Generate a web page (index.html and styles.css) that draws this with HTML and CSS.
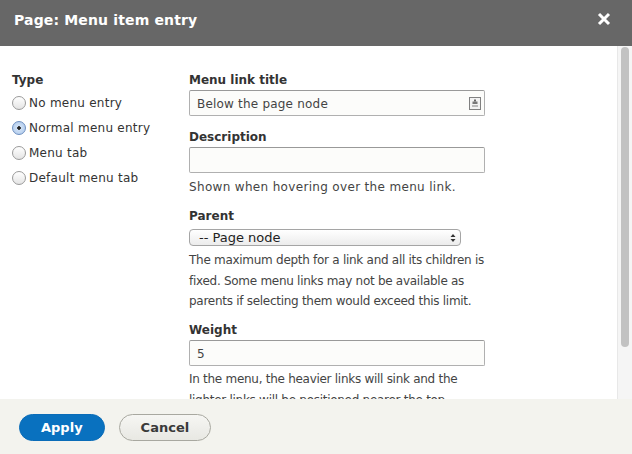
FILE: index.html
```html
<!DOCTYPE html>
<html lang="en">

<head>
    <meta charset="UTF-8">
    <meta name="viewport" content="width=device-width, initial-scale=1.0">
    <title>Page: Menu item entry</title>
    <link rel="stylesheet" href="styles.css">
</head>

<body>
    <div class="dialog">
        <div class="titlebar">
            <h1>Page: Menu item entry</h1>
            <svg class="close" width="14" height="14" viewBox="0 0 14 14">
                <path d="M2 2 L12 12 M12 2 L2 12" stroke="#fff" stroke-width="3" />
            </svg>
        </div>

        <div class="content">
            <form class="form">
                <div class="type-col">
                    <div class="title">Type</div>
                    <div class="radio"><span class="dot"></span>No menu entry</div>
                    <div class="radio"><span class="dot checked"></span>Normal menu entry</div>
                    <div class="radio"><span class="dot"></span>Menu tab</div>
                    <div class="radio"><span class="dot"></span>Default menu tab</div>
                </div>

                <div class="main-col">
                    <div class="section">
                        <div class="title">Menu link title</div>
                        <div class="input">
                            <span>Below the page node</span>
                            <svg class="token" width="12" height="13" viewBox="0 0 12 13">
                                <rect x="0.5" y="0.5" width="11" height="12" fill="#f2f2f2" stroke="#808080" />
                                <rect x="5" y="2.5" width="2" height="2" fill="#666" />
                                <rect x="3.5" y="4.5" width="5" height="2.5" fill="#777" />
                                <rect x="3" y="8" width="6" height="2" fill="#bbb" />
                            </svg>
                        </div>
                    </div>

                    <div class="section with-help">
                        <div class="title">Description</div>
                        <div class="input"></div>
                        <p class="help">Shown when hovering over the menu link.</p>
                    </div>

                    <div class="section with-help">
                        <div class="title">Parent</div>
                        <div class="select">
                            <span>-- Page node</span>
                            <svg width="6" height="10" viewBox="0 0 6 10">
                                <path d="M3 1 L5.5 4 H0.5 Z M3 9 L5.5 6 H0.5 Z" fill="#333" />
                            </svg>
                        </div>
                        <p class="help tight">The maximum depth for a link and all its children is<br>fixed. Some menu links may not be available as<br>parents if selecting them would exceed this limit.</p>
                    </div>

                    <div class="section">
                        <div class="title">Weight</div>
                        <div class="input"><span>5</span></div>
                        <p class="help tight last">In the menu, the heavier links will sink and the<br>lighter links will be positioned nearer the top.</p>
                    </div>
                </div>
            </form>

            <div class="scrollbar">
                <div class="thumb"></div>
            </div>
        </div>

        <div class="footer">
            <button type="button" class="btn primary">Apply</button>
            <button type="button" class="btn">Cancel</button>
        </div>
    </div>
</body>

</html>
```

FILE: styles.css
```css
body {
    margin: 0;
    font-family: "DejaVu Sans", Verdana, sans-serif;
    font-size: 12px;
    color: #333;
}

.dialog {
    width: 632px;
    height: 454px;
    display: flex;
    flex-direction: column;
    overflow: hidden;
}

.titlebar {
    height: 46px;
    flex-shrink: 0;
    box-sizing: border-box;
    padding: 0 21px 6px 14px;
    display: flex;
    align-items: center;
    justify-content: space-between;
    background: #676767;
}

.titlebar h1 {
    margin: 0;
    color: #fff;
    font-size: 14px;
    font-weight: bold;
    letter-spacing: 0.15px;
}

.close {
    margin-bottom: 2px;
}

.content {
    flex: 1;
    min-height: 0;
    display: flex;
    background: #fff;
    overflow: hidden;
}

.form {
    flex: 1;
    display: flex;
    padding: 26px 0 0 12px;
}

.type-col {
    width: 177px;
    flex-shrink: 0;
}

.main-col {
    width: 296px;
}

.title {
    font-weight: bold;
    line-height: 16px;
    color: #333;
}

.type-col .title {
    margin-bottom: 2px;
}

.radio {
    display: flex;
    align-items: center;
    height: 25px;
    color: #333;
    letter-spacing: 0.25px;
}

.dot {
    width: 14px;
    height: 14px;
    margin-right: 3px;
    box-sizing: border-box;
    border: 1px solid #9a9a9a;
    border-radius: 50%;
    background: linear-gradient(#fff, #e4e4e4);
}

.dot.checked {
    border-color: #6d8fc0;
    background: radial-gradient(circle, #222 0, #222 1.5px, #cfe0f5 2px, #a9c6ea 100%);
}

.section {
    margin-bottom: 13px;
}

.section.with-help {
    margin-bottom: 10.5px;
}

.input {
    height: 26px;
    margin-top: 2px;
    padding: 1px 3px 0 7px;
    box-sizing: border-box;
    display: flex;
    align-items: center;
    justify-content: space-between;
    border: 1px solid #b0b0b0;
    border-top-color: #999;
    border-radius: 2px;
    background: #fcfcfa;
    color: #444;
    letter-spacing: 0.2px;
}

.help {
    margin: 4px 0 0;
    line-height: 20.5px;
    color: #444;
    white-space: nowrap;
    letter-spacing: 0.33px;
}

.help.tight {
    letter-spacing: -0.28px;
}

.help.last {
    margin-top: 3px;
}

.select {
    width: 272px;
    height: 17px;
    margin: 5px 0 4px;
    padding: 0 4px 0 9px;
    box-sizing: border-box;
    display: flex;
    align-items: center;
    justify-content: space-between;
    border: 1px solid #a5a5a5;
    border-radius: 4px;
    background: linear-gradient(#fff, #ececec);
    color: #222;
    font-size: 13px;
}

.scrollbar {
    width: 15px;
    flex-shrink: 0;
    padding: 1px 3px 0;
    box-sizing: border-box;
    background: #f5f5f5;
    border-left: 1px solid #e8e8e8;
}

.thumb {
    height: 300px;
    border-radius: 4px;
    background: #c2c2c2;
}

.footer {
    height: 55px;
    flex-shrink: 0;
    padding: 0 19px;
    display: flex;
    align-items: center;
    gap: 14px;
    background: #f3f3ee;
}

.btn {
    height: 27px;
    padding: 0 21px;
    margin-top: 2px;
    border: 1px solid #a8a8a0;
    border-radius: 14px;
    background: linear-gradient(#f6f6f3, #e8e8e3);
    font-family: inherit;
    font-size: 13px;
    font-weight: bold;
    color: #3a3a3a;
}

.btn.primary {
    border-color: #0a6cb8;
    background: #0971bf;
    color: #fff;
}
```
